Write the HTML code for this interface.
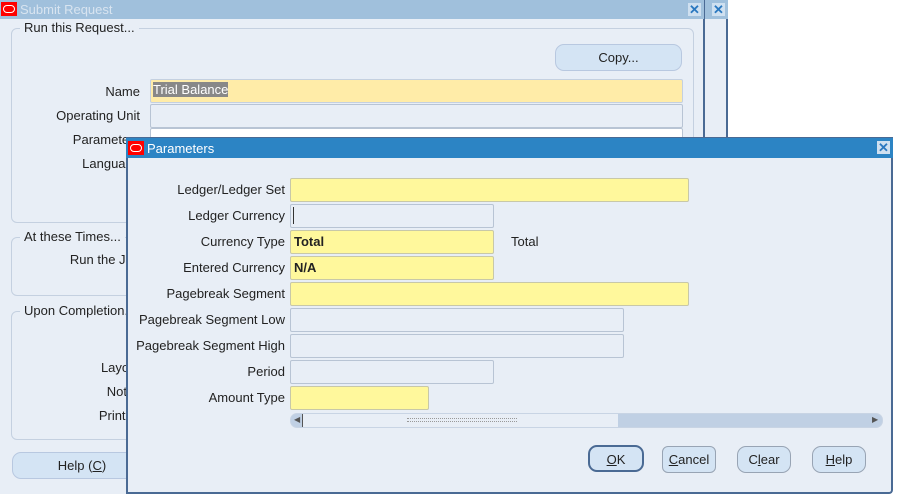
<!DOCTYPE html>
<html><head><style>
*{box-sizing:border-box}
body{margin:0;width:899px;height:494px;background:#fff;position:relative;overflow:hidden;font-family:"Liberation Sans",sans-serif;font-size:13px;color:#222}
.a{position:absolute}
.lbl{position:absolute;text-align:right;white-space:nowrap}
.fld{position:absolute;border:1px solid #b8c4d4;border-radius:2px;background:#e8eef6;height:24px;padding:3px 3px;white-space:nowrap}
.y{background:#fff89c;border-color:#c8c8a8}
.grp{position:absolute;border:1px solid #c4d0e0;border-radius:6px}
.gt{position:absolute;background:#e8eef6;padding:0 4px;top:-9px;left:8px}
.btn{position:absolute;border:1px solid #98a4b4;border-radius:9px;background:#d4e4f4;text-align:center;line-height:25px;height:27px}
.logo{position:absolute;width:16px;height:14px;background:#f00}
.logo:after{content:"";position:absolute;left:2px;top:3px;width:10px;height:6px;border:1px solid #fff;border-radius:5px}
.x{position:absolute;width:13px;height:13px;background:#cfe0f0;color:#2a78c0;font-size:13px;font-weight:bold;line-height:13px;text-align:center}
</style></head><body>
<div class="a" style="left:700px;top:0;width:28px;height:140px;background:#e8eef6;border-right:2px solid #4a6a94"></div>
<div class="a" style="left:700px;top:0;width:28px;height:19px;background:#a0c0dc"></div>
<div class="x" style="left:712px;top:3px">✕</div>
<div class="a" style="left:0;top:0;width:705px;height:494px;background:#e8eef6;border-right:2px solid #4a6a94"></div>
<div class="a" style="left:0;top:0;width:704px;height:19px;background:#a0c0dc"></div>
<div class="logo" style="left:1px;top:2px"></div>
<div class="a" style="left:20px;top:2px;color:#d8e4f0;font-size:13px">Submit Request</div>
<div class="x" style="left:688px;top:3px">✕</div>
<div class="grp" style="left:11px;top:28px;width:683px;height:195px"><span class="gt">Run this Request...</span></div>
<div class="btn" style="left:555px;top:44px;width:127px;border-color:#b8c8e0">Copy...</div>
<div class="lbl" style="left:20px;width:120px;top:84px">Name</div>
<div class="fld" style="left:150px;top:79px;width:533px;background:#ffeca8;border-color:#c4d0e0;padding:2px 2px"><span style="background:#888;color:#fff">Trial Balance</span></div>
<div class="lbl" style="left:20px;width:120px;top:108px">Operating Unit</div>
<div class="fld" style="left:150px;top:104px;width:533px"></div>
<div class="lbl" style="left:20px;width:120px;top:132px">Parameters</div>
<div class="fld" style="left:150px;top:128px;width:533px;background:#fff"></div>
<div class="lbl" style="left:20px;width:120px;top:156px">Language</div>
<div class="grp" style="left:11px;top:237px;width:683px;height:59px"><span class="gt">At these Times...</span></div>
<div class="lbl" style="left:20px;width:120px;top:252px">Run the Job</div>
<div class="grp" style="left:11px;top:311px;width:683px;height:129px"><span class="gt">Upon Completion...</span></div>
<div class="lbl" style="left:20px;width:120px;top:360px">Layout</div>
<div class="lbl" style="left:20px;width:120px;top:384px">Notify</div>
<div class="lbl" style="left:20px;width:120px;top:408px">Print to</div>
<div class="btn" style="left:12px;top:452px;width:140px;border-color:#b8c8e0">Help (<u>C</u>)</div>
<div class="a" style="left:126px;top:137px;width:767px;height:357px;background:#e8eef6;border:2px solid #4a6a94;border-top:0;border-radius:0 0 4px 0"></div>
<div class="a" style="left:126px;top:137px;width:767px;height:21px;background:#2c84c4;border-top:1px solid #4a6a94"></div>
<div class="logo" style="left:128px;top:141px"></div>
<div class="a" style="left:147px;top:141px;color:#fff;font-size:13px">Parameters</div>
<div class="x" style="left:877px;top:141px">✕</div>
<div class="lbl" style="left:120px;width:165px;top:182px">Ledger/Ledger Set</div>
<div class="fld y" style="left:290px;top:178px;width:399px"></div>
<div class="lbl" style="left:120px;width:165px;top:208px">Ledger Currency</div>
<div class="fld" style="left:290px;top:204px;width:204px;padding:2px 2px"><span style="display:inline-block;width:1px;height:17px;background:#333"></span></div>
<div class="lbl" style="left:120px;width:165px;top:234px">Currency Type</div>
<div class="fld y" style="left:290px;top:230px;width:204px;font-weight:bold">Total</div>
<div class="a" style="left:511px;top:234px">Total</div>
<div class="lbl" style="left:120px;width:165px;top:260px">Entered Currency</div>
<div class="fld y" style="left:290px;top:256px;width:204px;font-weight:bold">N/A</div>
<div class="lbl" style="left:120px;width:165px;top:286px">Pagebreak Segment</div>
<div class="fld y" style="left:290px;top:282px;width:399px"></div>
<div class="lbl" style="left:120px;width:165px;top:312px">Pagebreak Segment Low</div>
<div class="fld" style="left:290px;top:308px;width:334px"></div>
<div class="lbl" style="left:120px;width:165px;top:338px">Pagebreak Segment High</div>
<div class="fld" style="left:290px;top:334px;width:334px"></div>
<div class="lbl" style="left:120px;width:165px;top:364px">Period</div>
<div class="fld" style="left:290px;top:360px;width:204px"></div>
<div class="lbl" style="left:120px;width:165px;top:390px">Amount Type</div>
<div class="fld y" style="left:290px;top:386px;width:139px"></div>
<div class="a" style="left:290px;top:413px;width:593px;height:15px;background:#c0d0e4;border:1px solid #c8d4e4;border-radius:7px"></div>
<div class="a" style="left:302px;top:414px;width:316px;height:13px;background:#e8eef6;border-left:1px solid #555"></div>
<div class="a" style="left:407px;top:418px;width:110px;height:4px;border-top:1px dotted #999;border-bottom:1px dotted #999"></div>
<div class="a" style="left:294px;top:415px;font-size:8px;color:#555">◀</div>
<div class="a" style="left:872px;top:415px;font-size:8px;color:#555">▶</div>
<div class="btn" style="left:588px;top:445px;width:56px;border:2px solid #4a6a94"><u>O</u>K</div>
<div class="btn" style="left:662px;top:446px;width:54px;border-radius:6px"><u>C</u>ancel</div>
<div class="btn" style="left:737px;top:446px;width:54px">C<u>l</u>ear</div>
<div class="btn" style="left:812px;top:446px;width:54px"><u>H</u>elp</div>
</body></html>
